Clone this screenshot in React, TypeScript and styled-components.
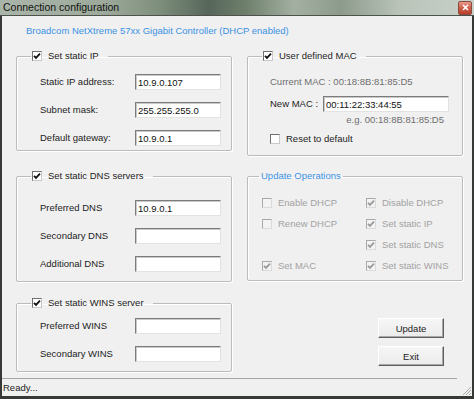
import React from "react";
import styled, { createGlobalStyle } from "styled-components";

const GlobalStyle = createGlobalStyle`
  html, body {
    margin: 0;
    padding: 0;
    background: #3a3d3a;
  }
  * {
    box-sizing: border-box;
  }
`;

const FONT = `"Liberation Sans", Arial, sans-serif`;

const Window = styled.div`
  width: 474px;
  height: 399px;
  display: flex;
  flex-direction: column;
  padding-bottom: 3px;
  background: #363936;
  font-family: ${FONT};
  font-size: 9.5px;
  color: #1c1c1c;
  overflow: hidden;
`;

const TitleBar = styled.div`
  height: 16px;
  flex: none;
  display: flex;
  align-items: center;
  justify-content: space-between;
  padding: 0 2px 0 3px;
  border-bottom: 1px solid #4d524d;
  background: linear-gradient(
    90deg,
    #aab5a9 0%,
    #9daa9b 22%,
    #7d8d7b 34%,
    #56665a 44%,
    #6f806c 52%,
    #a3b0a2 62%,
    #8d9b8c 72%,
    #b9c3b8 84%,
    #c9d1c8 100%
  );
`;

const TitleText = styled.span`
  font-size: 10.5px;
  color: #111;
  line-height: 15px;
`;

const CloseButton = styled.div`
  width: 14px;
  height: 14px;
  display: flex;
  align-items: center;
  justify-content: center;
  border: 1px solid #8a4a40;
  border-radius: 2px;
  background: linear-gradient(180deg, #e79c8c 0%, #cf5d48 50%, #b9412e 100%);
`;

const Client = styled.div`
  flex: 1;
  display: flex;
  flex-direction: column;
  margin: 0 2px;
  background: #f0f0f0;
`;

const Header = styled.div`
  padding: 9px 0 0 24px;
  line-height: 12px;
  color: #3b90e4;
`;

const Columns = styled.div`
  display: flex;
  gap: 15px;
  margin-top: 13px;
  padding: 0 9px 0 14px;
`;

const Column = styled.div`
  width: 216px;
  display: flex;
  flex-direction: column;
`;

const Group = styled.fieldset<{ $top?: number }>`
  margin: ${(p) => p.$top ?? 0}px 0 0 0;
  padding: 0;
  min-width: 0;
  border: 1px solid #bcbcbc;
  border-radius: 2px;
  box-shadow: inset 1px 1px 0 #ffffff, 1px 1px 0 #ffffff;
`;

const Legend = styled.legend<{ $offset: number }>`
  margin-left: ${(p) => p.$offset}px;
  padding: 0 9px 0 1px;
  height: 12px;
  line-height: 12px;
  display: flex;
  align-items: center;
  gap: 6px;
`;

const BlueLegend = styled.legend`
  margin-left: 11px;
  padding: 0 2px;
  height: 12px;
  line-height: 12px;
  color: #3b90e4;
`;

const GroupBody = styled.div<{ $pad: string }>`
  padding: ${(p) => p.$pad};
  display: flex;
  flex-direction: column;
`;

const FieldRows = styled.div`
  display: flex;
  flex-direction: column;
  gap: 12px;
`;

const FieldRow = styled.div<{ $labelWidth: number }>`
  display: grid;
  grid-template-columns: ${(p) => p.$labelWidth}px auto;
  align-items: center;
  height: 16px;
`;

const Label = styled.span`
  line-height: 12px;
  white-space: nowrap;
`;

const TextBox = styled.input<{ $width: number }>`
  width: ${(p) => p.$width}px;
  height: 16px;
  padding: 0 0 0 2px;
  margin: 0;
  font-family: ${FONT};
  font-size: 9.5px;
  color: #111;
  background: #fff;
  border: 1px solid;
  border-color: #7c7c7c #e2e2e2 #e2e2e2 #7c7c7c;
  box-shadow: inset 1px 1px 0 #c9c9c9;
  outline: none;
`;

const Muted = styled.div<{ $align?: string; $top?: number }>`
  margin-top: ${(p) => p.$top ?? 0}px;
  line-height: 12px;
  color: #6e6e6e;
  text-align: ${(p) => p.$align ?? "left"};
`;

const CheckRow = styled.label<{ $disabled?: boolean; $top?: number }>`
  display: flex;
  align-items: center;
  gap: 6px;
  height: 12px;
  margin-top: ${(p) => p.$top ?? 0}px;
  line-height: 12px;
  color: ${(p) => (p.$disabled ? "#a2a2a2" : "#1c1c1c")};
  white-space: nowrap;
`;

const Box = styled.span<{ $disabled?: boolean }>`
  width: 10px;
  height: 10px;
  flex: none;
  display: flex;
  align-items: center;
  justify-content: center;
  border: 1px solid;
  border-color: ${(p) =>
    p.$disabled ? "#a9a9a9 #dadada #dadada #a9a9a9" : "#6f6f6f #c8c8c8 #c8c8c8 #6f6f6f"};
  background: ${(p) => (p.$disabled ? "#f3f3f3" : "#fff")};
`;

const OpsGrid = styled.div`
  display: grid;
  grid-template-columns: 104px auto;
  grid-auto-rows: 21px;
  align-items: center;
`;

const Buttons = styled.div`
  display: flex;
  flex-direction: column;
  align-items: flex-end;
  gap: 8px;
  margin: 37px 19px 0 0;
`;

const Button = styled.button`
  width: 66px;
  height: 20px;
  padding: 0;
  font-family: ${FONT};
  font-size: 9.5px;
  color: #1c1c1c;
  background: linear-gradient(180deg, #f6f6f6 0%, #ebebeb 100%);
  border: 1px solid;
  border-color: #ffffff #5e5e5e #5e5e5e #ffffff;
  box-shadow: inset -1px -1px 0 #a8a8a8;
`;

const StatusBar = styled.div`
  margin-top: auto;
  height: 18px;
  display: flex;
`;

const StatusPanel = styled.div`
  flex: 1;
  border-top: 1px solid #a5a5a5;
  padding-left: 1px;
  display: flex;
  align-items: center;
  line-height: 12px;
`;

const Grip = styled.div`
  width: 15px;
  display: flex;
  align-items: flex-end;
  justify-content: flex-end;
`;

function Check({ checked, disabled }: { checked?: boolean; disabled?: boolean }) {
  return (
    <Box $disabled={disabled}>
      {checked && (
        <svg width="8" height="8" viewBox="0 0 8 8">
          <polyline
            points="1,3.8 3,5.9 7,1.6"
            fill="none"
            stroke={disabled ? "#9a9a9a" : "#111"}
            strokeWidth="1.8"
          />
        </svg>
      )}
    </Box>
  );
}

interface FieldProps {
  label: string;
  value?: string;
}

function Field({ label, value = "" }: FieldProps) {
  return (
    <FieldRow $labelWidth={95}>
      <Label>{label}</Label>
      <TextBox $width={86} value={value} readOnly />
    </FieldRow>
  );
}

export default function App() {
  return (
    <>
      <GlobalStyle />
      <Window>
        <TitleBar>
          <TitleText>Connection configuration</TitleText>
          <CloseButton>
            <svg width="7" height="7" viewBox="0 0 7 7">
              <path d="M1 1 L6 6 M6 1 L1 6" stroke="#fff" strokeWidth="1.6" />
            </svg>
          </CloseButton>
        </TitleBar>
        <Client>
          <Header>Broadcom NetXtreme 57xx Gigabit Controller (DHCP enabled)</Header>
          <Columns>
            <Column>
              <Group>
                <Legend $offset={14}>
                  <Check checked />
                  <span>Set static IP</span>
                </Legend>
                <GroupBody $pad="12px 10px 4px 23px">
                  <FieldRows>
                    <Field label="Static IP address:" value="10.9.0.107" />
                    <Field label="Subnet mask:" value="255.255.255.0" />
                    <Field label="Default gateway:" value="10.9.0.1" />
                  </FieldRows>
                </GroupBody>
              </Group>

              <Group $top={19}>
                <Legend $offset={14}>
                  <Check checked />
                  <span>Set static DNS servers</span>
                </Legend>
                <GroupBody $pad="18px 10px 9px 23px">
                  <FieldRows>
                    <Field label="Preferred DNS" value="10.9.0.1" />
                    <Field label="Secondary DNS" />
                    <Field label="Additional DNS" />
                  </FieldRows>
                </GroupBody>
              </Group>

              <Group $top={15}>
                <Legend $offset={14}>
                  <Check checked />
                  <span>Set static WINS server</span>
                </Legend>
                <GroupBody $pad="9px 10px 9px 23px">
                  <FieldRows>
                    <Field label="Preferred WINS" />
                    <Field label="Secondary WINS" />
                  </FieldRows>
                </GroupBody>
              </Group>
            </Column>

            <Column>
              <Group>
                <Legend $offset={14}>
                  <Check checked />
                  <span>User defined MAC</span>
                </Legend>
                <GroupBody $pad="14px 13px 10px 22px">
                  <Muted>Current MAC : 00:18:8B:81:85:D5</Muted>
                  <FieldRow $labelWidth={53} style={{ marginTop: 8 }}>
                    <Label>New MAC :</Label>
                    <TextBox $width={126} value="00:11:22:33:44:55" readOnly />
                  </FieldRow>
                  <Muted $align="right" $top={2} style={{ paddingRight: 5 }}>
                    e.g. 00:18:8B:81:85:D5
                  </Muted>
                  <CheckRow $top={7}>
                    <Check />
                    <span>Reset to default</span>
                  </CheckRow>
                </GroupBody>
              </Group>

              <Group $top={14}>
                <BlueLegend>Update Operations</BlueLegend>
                <GroupBody $pad="10px 8px 4px 14px">
                  <OpsGrid>
                    <CheckRow $disabled>
                      <Check disabled />
                      <span>Enable DHCP</span>
                    </CheckRow>
                    <CheckRow $disabled>
                      <Check disabled checked />
                      <span>Disable DHCP</span>
                    </CheckRow>
                    <CheckRow $disabled>
                      <Check disabled />
                      <span>Renew DHCP</span>
                    </CheckRow>
                    <CheckRow $disabled>
                      <Check disabled checked />
                      <span>Set static IP</span>
                    </CheckRow>
                    <span />
                    <CheckRow $disabled>
                      <Check disabled checked />
                      <span>Set static DNS</span>
                    </CheckRow>
                    <CheckRow $disabled>
                      <Check disabled checked />
                      <span>Set MAC</span>
                    </CheckRow>
                    <CheckRow $disabled>
                      <Check disabled checked />
                      <span>Set static WINS</span>
                    </CheckRow>
                  </OpsGrid>
                </GroupBody>
              </Group>

              <Buttons>
                <Button>Update</Button>
                <Button>Exit</Button>
              </Buttons>
            </Column>
          </Columns>

          <StatusBar>
            <StatusPanel>Ready...</StatusPanel>
            <Grip>
              <svg width="12" height="12" viewBox="0 0 12 12">
                <path
                  d="M11 3 L3 11 M11 6 L6 11 M11 9 L9 11"
                  stroke="#a9a9a9"
                  strokeWidth="1"
                />
              </svg>
            </Grip>
          </StatusBar>
        </Client>
      </Window>
    </>
  );
}
